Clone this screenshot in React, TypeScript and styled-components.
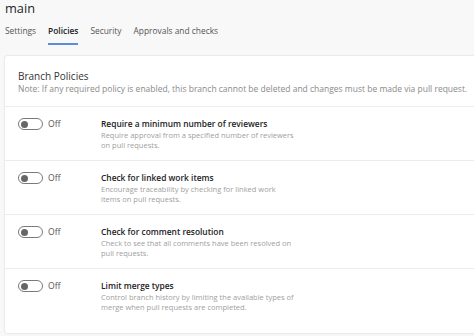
import React from "react";
import styled, { createGlobalStyle } from "styled-components";

const GlobalStyle = createGlobalStyle`
  html, body {
    margin: 0;
    padding: 0;
    background: #f8f8f8;
    overflow: hidden;
    font-family: "Open Sans", "Noto Sans", sans-serif;
  }
`;

const Page = styled.div`
  width: 474px;
  height: 336px;
  padding-left: 5px;
  box-sizing: border-box;
`;

const PageTitle = styled.h1`
  margin: 0;
  font-size: 12.8px;
  font-weight: 400;
  line-height: 16px;
  color: #1e1e1e;
`;

const Tabs = styled.div`
  display: flex;
  gap: 12px;
`;

const Tab = styled.div<{ $active?: boolean }>`
  padding: 9px 0 6px;
  font-size: 8.4px;
  line-height: 12px;
  color: ${(p) => (p.$active ? "#222" : "#555")};
  font-weight: ${(p) => (p.$active ? 600 : 400)};
  border-bottom: 2px solid ${(p) => (p.$active ? "#5b8ed6" : "transparent")};
`;

const Card = styled.div`
  margin-top: 11px;
  width: 475px;
  height: 277px;
  background: #fff;
  box-shadow: 0 0 2px rgba(0, 0, 0, 0.2);
  border-radius: 2px;
`;

const CardHeader = styled.div`
  padding: 13px 13px 11px;
  border-bottom: 1px solid #ececec;
`;

const CardTitle = styled.div`
  font-size: 10px;
  line-height: 14px;
  color: #333;
`;

const Note = styled.div`
  font-size: 8.5px;
  line-height: 12px;
  color: #8a8a8a;
  white-space: nowrap;
`;

const PolicyRow = styled.div<{ $last?: boolean }>`
  display: grid;
  grid-template-columns: 83px 1fr;
  padding: 11px 13px 0;
  height: ${(p) => (p.$last ? "63px" : "54px")};
  box-sizing: border-box;
  border-bottom: ${(p) => (p.$last ? "none" : "1px solid #ececec")};
`;

const ToggleWrap = styled.div`
  display: flex;
  align-items: center;
  gap: 5px;
  height: 12px;
`;

const Switch = styled.div`
  width: 25px;
  height: 12px;
  box-sizing: border-box;
  border: 1px solid #7a7a7a;
  border-radius: 7px;
  display: flex;
  align-items: center;
  padding-left: 2px;
`;

const Knob = styled.div`
  width: 7px;
  height: 7px;
  border-radius: 50%;
  background: #666;
`;

const OffLabel = styled.span`
  font-size: 8.6px;
  line-height: 12px;
  color: #555;
`;

const PolicyTitle = styled.div`
  font-size: 8.4px;
  line-height: 12px;
  font-weight: 600;
  color: #222;
`;

const DescLine = styled.div`
  font-size: 7.5px;
  line-height: 10px;
  color: #a0a0a0;
  white-space: nowrap;
`;

const policies = [
  {
    title: "Require a minimum number of reviewers",
    desc: ["Require approval from a specified number of reviewers", "on pull requests."],
  },
  {
    title: "Check for linked work items",
    desc: ["Encourage traceability by checking for linked work", "items on pull requests."],
  },
  {
    title: "Check for comment resolution",
    desc: ["Check to see that all comments have been resolved on", "pull requests."],
  },
  {
    title: "Limit merge types",
    desc: ["Control branch history by limiting the available types of", "merge when pull requests are completed."],
  },
];

const App: React.FC = () => {
  return (
    <>
      <GlobalStyle />
      <Page>
        <PageTitle>main</PageTitle>
        <Tabs>
          <Tab>Settings</Tab>
          <Tab $active>Policies</Tab>
          <Tab>Security</Tab>
          <Tab>Approvals and checks</Tab>
        </Tabs>
        <Card>
          <CardHeader>
            <CardTitle>Branch Policies</CardTitle>
            <Note>
              Note: If any required policy is enabled, this branch cannot be deleted and changes must be made via pull request.
            </Note>
          </CardHeader>
          {policies.map((p, i) => (
            <PolicyRow key={p.title} $last={i === policies.length - 1}>
              <ToggleWrap>
                <Switch>
                  <Knob />
                </Switch>
                <OffLabel>Off</OffLabel>
              </ToggleWrap>
              <div>
                <PolicyTitle>{p.title}</PolicyTitle>
                {p.desc.map((line) => (
                  <DescLine key={line}>{line}</DescLine>
                ))}
              </div>
            </PolicyRow>
          ))}
        </Card>
      </Page>
    </>
  );
};

export default App;
